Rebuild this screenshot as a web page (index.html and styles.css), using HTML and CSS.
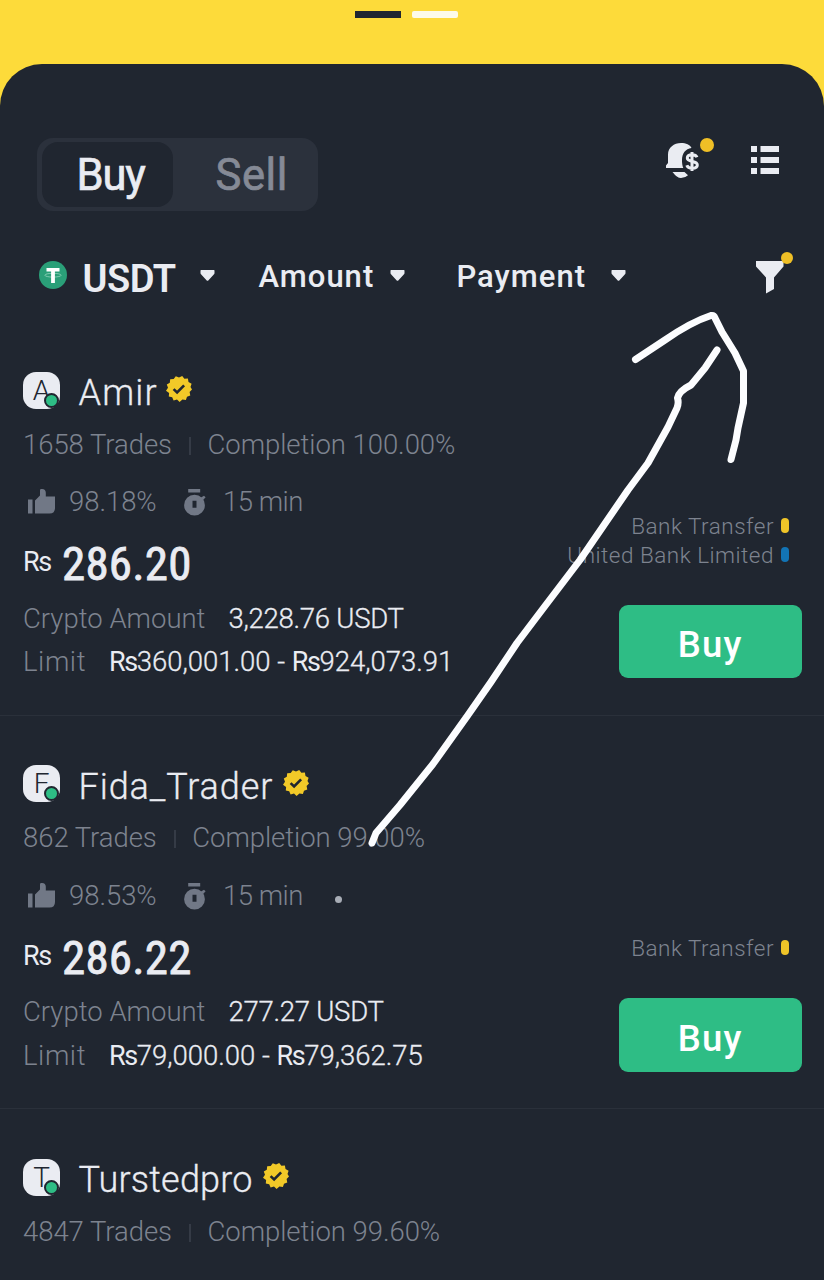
FILE: index.html
```html
<!DOCTYPE html>
<html lang="en">
<head>
<meta charset="utf-8">
<title>P2P Trading</title>
<link rel="stylesheet" href="styles.css">
</head>
<body>
<svg class="defs" width="0" height="0" aria-hidden="true">
  <defs>
    <symbol id="caret" viewBox="0 0 14 11"><path d="M0 .5 Q0 0 .6 0 H13.4 Q14 0 14 .5 V3 Q14 3.8 13.5 4.3 L8 10.3 Q7 11.3 6 10.3 L.5 4.3 Q0 3.8 0 3z" fill="#eaecf2"/></symbol>
    <symbol id="verified" viewBox="0 0 26 26">
      <path d="M13 1.400L16.200 0l2.200 2.700 3.500-.1.600 3.500 3.100 1.600-1.100 3.300L26 13.500l-2.400 2.600.7 3.400-3.300 1.200-1.100 3.300-3.500-.5L13.600 26 11 23.600l-3.400.9-1.400-3.200-3.400-.9.300-3.500L0 14.700l2-2.900L.8 8.500l3-1.800.4-3.500 3.500-.1L9.800.2z" fill="#f2c928"/>
      <path d="M7.600 13.100l3.500 3.400 7-7.200" fill="none" stroke="#202630" stroke-width="2.600"/>
    </symbol>
    <symbol id="thumb" viewBox="0 0 27 25">
      <path d="M0 10.500h4.500V24.500H0zM7 11.500l5-5V1.300Q12 0 13.300 0h.7q3.800 0 3.800 3.800V7.500H27v11.500q0 5.500-5.500 5.500H7z" fill="#717886"/>
    </symbol>
    <symbol id="timer" viewBox="0 0 22 27">
      <path d="M4.200 0h12v3.500h-12z" fill="#717886"/>
      <path d="M17 8.500l3-1.800 1.600 1.600-2.700 3z" fill="#717886"/>
      <path fill-rule="evenodd" d="M10.500 5.800a10.400 10.400 0 1 1 0 20.800a10.400 10.400 0 0 1 0-20.800zM8.500 11.800v7h4v-7z" fill="#717886"/>
    </symbol>
  </defs>
</svg>

<header class="banner">
  <span class="page-mark active"></span>
  <span class="page-mark"></span>
</header>

<main class="panel">
  <div class="toolbar">
    <div class="tabs"><span class="tab selected">Buy</span><span class="tab sell">Sell</span></div>
    <div class="actions">
      <span class="bell">
        <svg width="34" height="36" viewBox="0 0 34 36">
          <path d="M0 25v-2.500l2-2.500v-8.500C2 4.500 8 0 15 0c5 0 9 1.800 10.500 5-6 .8-9.500 5.500-9.500 12 0 3 .3 5.800 1.300 8z" fill="#eaecf2"/>
          <path d="M6.500 29h12l3.500 3.200Q19 35 15 35T6.500 29z" fill="#eaecf2"/>
          <path d="M31 14.300c-.7-1.700-2.500-2.500-5-2.500-2.800 0-4.700 1.300-4.700 3.300 0 4.700 10 2.200 10 6.800 0 2-2 3.300-5 3.300-2.700 0-4.800-1-5.500-3M26 9v19" fill="none" stroke="#eaecf2" stroke-width="3"/>
        </svg>
        <i class="dot"></i>
      </span>
      <svg width="28" height="28" viewBox="0 0 28 28"><path d="M0 0h6v6H0zM9.500 0H28v6H9.500zM0 11h6v6H0zM9.500 11H28v6H9.500zM0 22h6v6H0zM9.500 22H28v6H9.500z" fill="#eaecf2"/></svg>
    </div>
  </div>

  <div class="filters">
    <svg class="coin" width="28" height="28" viewBox="0 0 28 28">
      <circle cx="14" cy="14" r="14" fill="#2a9f78"/>
      <ellipse cx="14" cy="14.200" rx="8.200" ry="1.900" fill="none" stroke="#7fcbb0" stroke-width="1"/>
      <path d="M7.500 7h13v3.600h-4.600V22h-3.800V10.600H7.500z" fill="#fff"/>
    </svg>
    <span class="asset">USDT</span>
    <svg class="caret c1"><use href="#caret"/></svg>
    <span class="filter amount">Amount</span>
    <svg class="caret c2"><use href="#caret"/></svg>
    <span class="filter payment">Payment</span>
    <svg class="caret c3"><use href="#caret"/></svg>
    <span class="funnel">
      <svg width="28" height="33" viewBox="0 0 28 33"><path d="M0 0h27.500v5.500L18 16.500V28l-8 4.500V16.500L0 5.500z" fill="#eaecf2"/></svg>
      <i class="dot small"></i>
    </span>
  </div>

  <section class="offer">
    <div class="info">
      <div class="trader"><span class="avatar">A<i></i></span><span class="name amir">Amir</span><svg class="verified"><use href="#verified"/></svg></div>
      <div class="record"><span>1658 Trades</span><i class="bar"></i><span>Completion 100.00%</span></div>
      <div class="stats"><svg class="thumb"><use href="#thumb"/></svg><span class="rating">98.18%</span><svg class="timer"><use href="#timer"/></svg><span>15 min</span></div>
      <div class="price"><span class="rs">Rs</span><b>286.20</b></div>
      <div class="detail"><span class="label">Crypto Amount</span><span class="value">3,228.76 USDT</span></div>
      <div class="detail limit"><span class="label">Limit</span><span class="value"><span class="rs">Rs</span>360,001.00 - <span class="rs">Rs</span>924,073.91</span></div>
    </div>
    <div class="side">
      <div class="method">Bank Transfer<i></i></div>
      <div class="method blue">United Bank Limited<i></i></div>
      <button class="buy">Buy</button>
    </div>
  </section>

  <section class="offer">
    <div class="info">
      <div class="trader"><span class="avatar">F<i></i></span><span class="name fida">Fida_Trader</span><svg class="verified"><use href="#verified"/></svg></div>
      <div class="record"><span>862 Trades</span><i class="bar"></i><span>Completion 99.00%</span></div>
      <div class="stats"><svg class="thumb"><use href="#thumb"/></svg><span class="rating">98.53%</span><svg class="timer"><use href="#timer"/></svg><span>15 min</span><i class="speck"></i></div>
      <div class="price"><span class="rs">Rs</span><b>286.22</b></div>
      <div class="detail"><span class="label">Crypto Amount</span><span class="value">277.27 USDT</span></div>
      <div class="detail limit"><span class="label">Limit</span><span class="value"><span class="rs">Rs</span>79,000.00 - <span class="rs">Rs</span>79,362.75</span></div>
    </div>
    <div class="side">
      <div class="method">Bank Transfer<i></i></div>
      <button class="buy">Buy</button>
    </div>
  </section>

  <section class="offer">
    <div class="info">
      <div class="trader"><span class="avatar">T<i></i></span><span class="name tursted">Turstedpro</span><svg class="verified"><use href="#verified"/></svg></div>
      <div class="record"><span>4847 Trades</span><i class="bar"></i><span>Completion 99.60%</span></div>
    </div>
  </section>
</main>

<svg class="arrow" width="824" height="1280" viewBox="0 0 824 1280">
  <path d="M635.500 359.500L665 340Q691 322 711 315.500Q714 315 715 318L722 332L735 353L743.500 371V403L738 428L736 440L731 459.500"/>
  <path d="M717 350L705 368L691 385Q679 391 677.500 398Q679 403 677 408L668 427L648 463L628 490L580 560L545 606L517 643L491 682L468 715L433 764L400 805L376 833L372 843"/>
</svg>
</body>
</html>
```
FILE: styles.css
```css
* { box-sizing: border-box; }
body {
  margin: 0;
  width: 824px;
  height: 1280px;
  overflow: hidden;
  position: relative;
  background: #fddb3a;
  color: #eaecf2;
  font-family: Roboto, "Liberation Sans", sans-serif;
}
svg { display: block; flex: none; }
span { white-space: nowrap; }
.defs { position: absolute; }

.banner { height: 64px; padding-top: 11px; display: flex; justify-content: center; gap: 11px; padding-right: 11px; }
.page-mark { width: 46px; height: 7px; border-radius: 2px; background: #fdfbe9; }
.page-mark.active { background: #202630; border-radius: 0; }

.panel { height: 1216px; overflow: hidden; border-radius: 42px 42px 0 0; background: #202630; }

.toolbar { height: 147px; padding: 73.5px 45px 0 37px; display: flex; justify-content: space-between; align-items: flex-start; }
.tabs { width: 281px; height: 73.5px; padding: 4.500px; display: flex; border-radius: 16px; background: #2b313c; }
.tab { line-height: 64px; font-size: 43.500px; font-weight: 400; -webkit-text-stroke: .7px; padding-top: 1.500px; }
.tab.selected { width: 131px; height: 64.500px; padding-left: 35px; letter-spacing: -1.200px; border-radius: 16px; background: #202630; }
.tab.sell { padding-left: 43px; letter-spacing: .6px; color: #858a96; }
.actions { display: flex; gap: 51px; padding-top: 5px; }
.actions > svg { margin-top: 3.500px; }
.bell, .funnel { position: relative; }
.dot { position: absolute; left: 34px; top: -5px; width: 14px; height: 14px; border-radius: 50%; background: #efbf26; }
.dot.small { left: 25px; top: -9px; width: 12px; height: 12px; }

.filters { height: 111px; padding: 34px 0 0 38.500px; display: flex; align-items: flex-start; }
.coin { margin-top: 16px; }
.asset { margin-left: 16px; width: 93px; font-size: 38px; font-weight: 600; line-height: 44px; letter-spacing: -.500px; margin-top: 12px; }
.filter { font-size: 31px; font-weight: 500; line-height: 40px; letter-spacing: 1px; margin-top: 12px; }
.caret { width: 15px; height: 11px; margin-top: 25px; }
.c1 { margin-left: 24.500px; }
.amount { margin-left: 43.500px; width: 117px; }
.c2 { margin-left: 14px; }
.payment { margin-left: 52px; width: 132px; }
.c3 { margin-left: 22px; }
.funnel { margin: 16px 0 0 130.500px; }

.offer { height: 393.500px; display: flex; justify-content: space-between; border-bottom: 1px solid #2a303a; }
.info { padding: 48px 0 0 23px; }
.trader { height: 44px; display: flex; align-items: flex-start; }
.avatar { position: relative; width: 37px; height: 37px; margin-top: 1.500px; border-radius: 13px; background: #eaecf2; color: #202630; font-size: 28px; font-weight: 300; line-height: 37px; text-align: center; }
.avatar i { position: absolute; left: 21px; top: 21px; width: 15px; height: 15px; border: 2.500px solid #202630; border-radius: 50%; background: #2ebd85; }
.name { margin-left: 18.500px; font-size: 36px; font-weight: 300; -webkit-text-stroke: .3px; line-height: 44px; padding-top: 1px; }
.amir { width: 86.500px; letter-spacing: 1.200px; }
.fida { width: 203.500px; letter-spacing: .900px; }
.tursted { width: 183.500px; letter-spacing: .200px; }
.verified { width: 26px; height: 26px; margin: 6px 0 0 1px; }
.record, .stats, .detail { display: flex; align-items: flex-start; height: 34px; font-size: 27.500px; font-weight: 300; line-height: 34px; letter-spacing: -.050px; color: #7d838f; }
.record { margin-top: 13.500px; }
.bar { width: 2px; height: 18px; margin: 9px 16px 0 17.500px; background: #353b46; }
.stats { margin-top: 23.500px; padding-left: 5px; }
.thumb { width: 27px; height: 25px; margin-top: 4px; }
.rating { margin-left: 14px; width: 96px; }
.timer { width: 22px; height: 27px; margin: 4px 17px 0 19px; }
.timer + span { letter-spacing: -.500px; }
.speck { width: 7px; height: 7px; margin: 17px 0 0 32px; border-radius: 50%; background: #a8adb6; }
.price { margin-top: 17px; height: 56px; display: flex; line-height: 56px; }
.price .rs { width: 39px; font-size: 27px; line-height: 53px; }
.rs { letter-spacing: -1.500px; }
.price b { font-size: 47px; font-weight: 400; font-stretch: 75%; letter-spacing: .200px; -webkit-text-stroke: .8px; }
.detail { margin-top: 9.500px; }
.label { letter-spacing: 0; }
.value { margin-left: 23px; color: #eaecf2; font-weight: 300; letter-spacing: -.250px; -webkit-text-stroke: .3px; }
.limit .label { letter-spacing: .600px; }
.limit .value { letter-spacing: 0; }
.limit .rs { letter-spacing: -1.500px; font-size: 27px; font-weight: 400; -webkit-text-stroke: 0; }

.side { width: 234px; padding: 0 22px 36.500px 0; display: flex; flex-direction: column; align-items: flex-end; justify-content: flex-end; }
.method { display: flex; align-items: flex-start; padding-right: 13.500px; white-space: nowrap; line-height: 28.500px; font-size: 22.500px; font-weight: 300; letter-spacing: .500px; color: #7d838f; }
.method i { width: 8px; height: 15px; margin: 6px 0 0 6.500px; border-radius: 4px; background: #efc428; }
.method.blue i { background: #1274b5; }
.buy { margin-top: 35.500px; width: 183.500px; height: 73.500px; padding: 7px 0 0; border: 0; border-radius: 9px; background: #2ebd85; color: #fff; font: 500 36.500px Roboto, sans-serif; letter-spacing: 1.200px; }

.arrow { position: absolute; left: 0; top: 0; fill: none; stroke: #fcfdff; stroke-width: 7; stroke-linecap: round; stroke-linejoin: round; }
```
